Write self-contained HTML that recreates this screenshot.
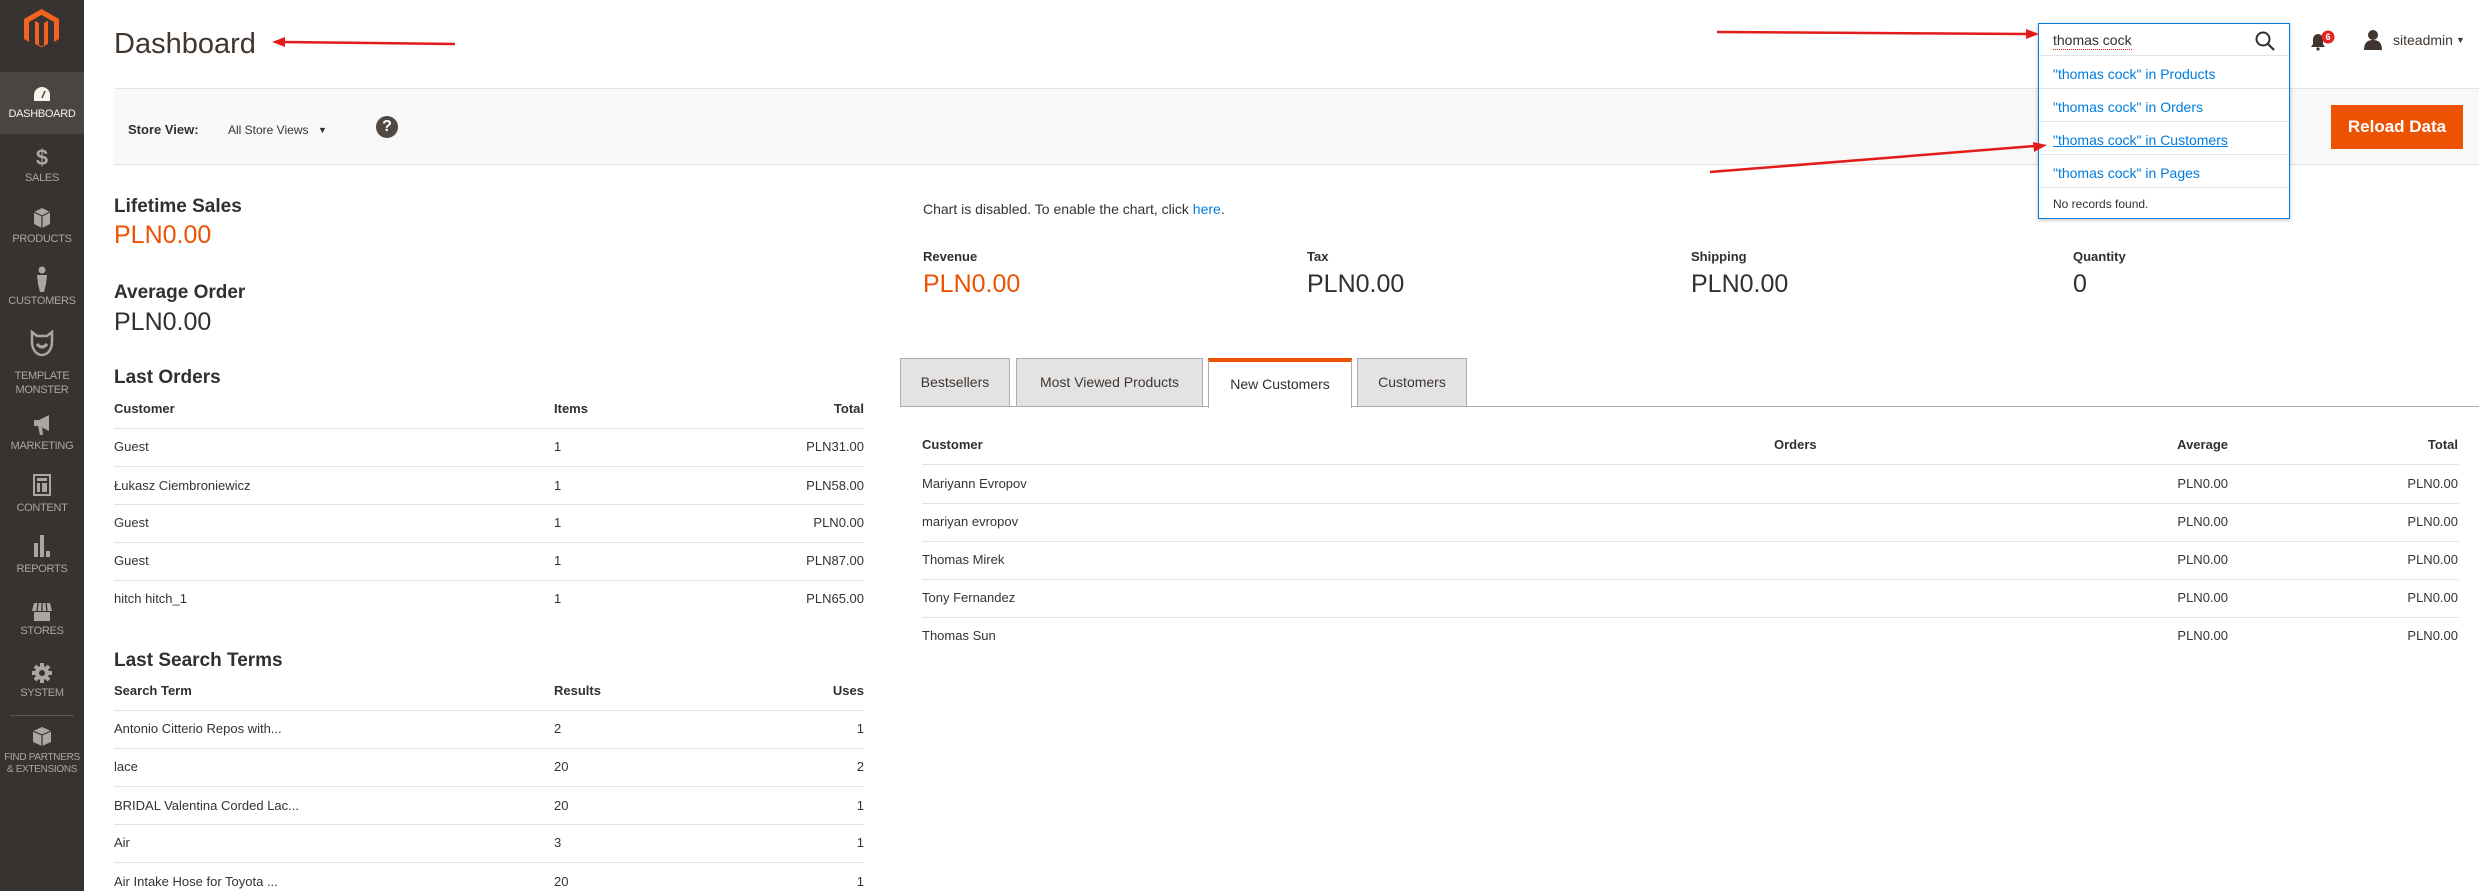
<!DOCTYPE html>
<html><head><meta charset="utf-8">
<style>
*{margin:0;padding:0;box-sizing:border-box}
body{width:2479px;height:891px;overflow:hidden;background:#fff;font-family:"Liberation Sans",sans-serif;color:#303030;position:relative}
.a{position:absolute;white-space:nowrap}
.side{position:absolute;left:0;top:0;width:84px;height:891px;background:#373330}
.nl{position:absolute;left:0;width:84px;text-align:center;color:#aaa6a0;font-size:11px;line-height:12px;text-transform:uppercase;white-space:nowrap;letter-spacing:-0.3px}
.ni{position:absolute;left:0;width:84px;text-align:center;color:#aaa6a0}
.t{font-size:13px;line-height:16px;color:#333}
.h{font-size:13px;line-height:16px;font-weight:bold;color:#303030}
.ln{position:absolute;height:1px;background:#e3e3e3}
.r{text-align:right}
.sec{font-size:19px;font-weight:bold;line-height:24px;color:#303030}
.lk{font-size:14px;line-height:18px;color:#007bdb}
</style></head><body>
<div class="side">
  <svg style="position:absolute;left:24px;top:9px" width="35" height="40" viewBox="0 0 35 40"><path d="M17.5 0L0 10v20l5 3V13l12.5-7 12.5 7v20l5-3V10z M15 14v22l2.5 1.5 2.5-1.5V14l4 -2.3v23l-6.5 3.8-6.5-3.8v-23z" fill="#f26322"/></svg>
  <div style="position:absolute;left:0;top:72px;width:84px;height:62px;background:#4a4542"></div>
  <svg class="a" style="left:33px;top:86px" width="18" height="16" viewBox="0 0 18 16"><path d="M9 1a8 8 0 0 0-8 8v6h16V9a8 8 0 0 0-8-8z" fill="#f7f3eb"/><path d="M9 12l3-7" stroke="#4a4542" stroke-width="1.5"/></svg>
  <div class="nl" style="top:108px;color:#f7f3eb">Dashboard</div>
  <div class="ni" style="top:145px;font-size:22px;font-weight:bold">$</div>
  <div class="nl" style="top:172px">Sales</div>
  <svg class="a" style="left:34px;top:208px" width="16" height="20" viewBox="0 0 16 20"><path d="M8 0l8 4v12l-8 4-8-4V4z" fill="#aaa6a0"/><path d="M0 4l8 4 8-4M8 8v12" stroke="#373330" stroke-width="1.2" fill="none"/></svg>
  <div class="nl" style="top:233px">Products</div>
  <svg class="a" style="left:36px;top:266px" width="12" height="26" viewBox="0 0 12 26"><circle cx="6" cy="4" r="3.5" fill="#aaa6a0"/><path d="M1 9h10l-1 9-2 8H4l-2-8z" fill="#aaa6a0"/></svg>
  <div class="nl" style="top:295px">Customers</div>
  <svg class="a" style="left:30px;top:330px" width="24" height="28" viewBox="0 0 24 28"><path d="M2 2l5 4h10l5-4v10c0 8-5 13-10 13S2 20 2 12z" fill="none" stroke="#aaa6a0" stroke-width="2.5"/><path d="M7 14q5 6 10 0" stroke="#aaa6a0" stroke-width="3" fill="none"/></svg>
  <div class="nl" style="top:370px">Template</div>
  <div class="nl" style="top:384px">Monster</div>
  <svg class="a" style="left:32px;top:414px" width="20" height="22" viewBox="0 0 20 22"><path d="M2 6h5l10-5v16L7 12H2z M6 12l2 9h3l-1-8z" fill="#aaa6a0"/></svg>
  <div class="nl" style="top:440px">Marketing</div>
  <svg class="a" style="left:33px;top:474px" width="18" height="22" viewBox="0 0 18 22"><rect x="1" y="1" width="16" height="20" fill="none" stroke="#aaa6a0" stroke-width="2"/><rect x="4" y="4" width="10" height="3" fill="#aaa6a0"/><rect x="4" y="9" width="3" height="9" fill="#aaa6a0"/><rect x="9" y="9" width="5" height="9" fill="#aaa6a0"/></svg>
  <div class="nl" style="top:502px">Content</div>
  <svg class="a" style="left:34px;top:535px" width="18" height="22" viewBox="0 0 18 22"><rect x="0" y="8" width="4" height="14" fill="#aaa6a0"/><rect x="6" y="0" width="4" height="22" fill="#aaa6a0"/><rect x="12" y="16" width="4" height="6" fill="#aaa6a0"/></svg>
  <div class="nl" style="top:563px">Reports</div>
  <svg class="a" style="left:32px;top:602px" width="20" height="20" viewBox="0 0 20 20"><path d="M2 1h16l2 8H0z" fill="#aaa6a0"/><rect x="2" y="10" width="16" height="9" fill="#aaa6a0"/><path d="M6 1L5 9M10 1v8M14 1l1 8" stroke="#373330" stroke-width="1.3"/></svg>
  <div class="nl" style="top:625px">Stores</div>
  <svg class="a" style="left:32px;top:663px" width="20" height="20" viewBox="0 0 20 20"><circle cx="10" cy="10" r="7" fill="#aaa6a0"/><path d="M10 0v20M0 10h20M3 3l14 14M17 3L3 17" stroke="#aaa6a0" stroke-width="4"/><circle cx="10" cy="10" r="3" fill="#373330"/></svg>
  <div class="nl" style="top:687px">System</div>
  <div style="position:absolute;left:10px;top:715px;width:64px;height:1px;background:#5a5550"></div>
  <svg class="a" style="left:32px;top:725px" width="20" height="22" viewBox="0 0 20 22"><path d="M10 2l9 4v11l-9 4-9-4V6z" fill="#aaa6a0"/><path d="M1 6l9 4 9-4M10 10v11" stroke="#373330" stroke-width="1.2" fill="none"/></svg>
  <div class="nl" style="top:752px;font-size:10px">Find Partners</div>
  <div class="nl" style="top:764px;font-size:10px">&amp; Extensions</div>
</div>

<div class="a" style="left:114px;top:26px;font-size:29px;line-height:36px;color:#41362f">Dashboard</div>

<div style="position:absolute;left:114px;top:88px;width:2365px;height:77px;background:#f8f8f8;border-top:1px solid #e3e3e3;border-bottom:1px solid #e3e3e3"></div>
<div class="a" style="left:128px;top:121px;font-size:13px;font-weight:bold;line-height:18px">Store View:</div>
<div class="a" style="left:228px;top:121px;font-size:12px;line-height:18px;color:#333">All Store Views</div>
<div class="a" style="left:318px;top:121px;font-size:9px;line-height:18px">▼</div>
<div class="a" style="left:376px;top:116px;width:22px;height:22px;border-radius:50%;background:#514943;color:#fff;font-weight:bold;font-size:16px;line-height:22px;text-align:center">?</div>
<div class="a" style="left:2331px;top:105px;width:132px;height:44px;background:#eb5202;color:#fff;font-weight:bold;font-size:17px;line-height:44px;text-align:center">Reload Data</div>

<div class="a" style="left:2038px;top:23px;width:252px;height:196px;background:#fff;border:1px solid #007bdb;box-shadow:0 1px 4px rgba(0,0,0,.25)"></div>
<div class="a" style="left:2053px;top:31px;font-size:14px;line-height:18px;color:#303030;border-bottom:1px dotted #e22">thomas cock</div>
<svg class="a" style="left:2255px;top:31px" width="20" height="20"><circle cx="8" cy="8" r="6.5" fill="none" stroke="#303030" stroke-width="2"/><path d="M13 13l6 6" stroke="#303030" stroke-width="2.2"/></svg>
<div class="ln" style="left:2039px;top:55px;width:250px"></div>
<div class="a lk" style="left:2053px;top:65px">"thomas cock" in Products</div>
<div class="ln" style="left:2039px;top:88px;width:250px"></div>
<div class="a lk" style="left:2053px;top:98px">"thomas cock" in Orders</div>
<div class="ln" style="left:2039px;top:121px;width:250px"></div>
<div class="a lk" style="left:2053px;top:131px;text-decoration:underline">"thomas cock" in Customers</div>
<div class="ln" style="left:2039px;top:154px;width:250px"></div>
<div class="a lk" style="left:2053px;top:164px">"thomas cock" in Pages</div>
<div class="ln" style="left:2039px;top:187px;width:250px"></div>
<div class="a" style="left:2053px;top:196px;font-size:12px;line-height:16px;color:#333">No records found.</div>

<svg class="a" style="left:2308px;top:30px" width="30" height="22"><path d="M3 17h14l-2-3V9a5 5 0 0 0-10 0v5z" fill="#41362f"/><circle cx="10" cy="19" r="1.6" fill="#41362f"/><circle cx="20" cy="7" r="6.5" fill="#e22626"/><text x="20" y="10" font-size="9" fill="#fff" text-anchor="middle" font-family="Liberation Sans" font-weight="bold">6</text></svg>
<svg class="a" style="left:2362px;top:29px" width="22" height="22"><circle cx="11" cy="6" r="5" fill="#41362f"/><path d="M2 21q0-10 9-10t9 10z" fill="#41362f"/></svg>
<div class="a" style="left:2393px;top:31px;font-size:14px;line-height:18px;color:#41362f">siteadmin</div>
<div class="a" style="left:2456px;top:31px;font-size:9px;line-height:18px;color:#41362f">▼</div>

<div class="a sec" style="left:114px;top:195px">Lifetime Sales</div>
<div class="a" style="left:114px;top:220px;font-size:25px;line-height:30px;color:#eb5202">PLN0.00</div>
<div class="a sec" style="left:114px;top:281px">Average Order</div>
<div class="a" style="left:114px;top:307px;font-size:25px;line-height:30px;color:#303030">PLN0.00</div>
<div class="a sec" style="left:114px;top:366px">Last Orders</div>

<div class="a h" style="left:114px;top:401px">Customer</div>
<div class="a h" style="left:554px;top:401px">Items</div>
<div class="a h r" style="left:764px;top:401px;width:100px">Total</div>
<div class="ln" style="left:114px;top:428px;width:750px"></div>
<div class="a t" style="left:114px;top:439px">Guest</div><div class="a t" style="left:554px;top:439px">1</div><div class="a t r" style="left:764px;top:439px;width:100px">PLN31.00</div>
<div class="ln" style="left:114px;top:466px;width:750px"></div>
<div class="a t" style="left:114px;top:478px">Łukasz Ciembroniewicz</div><div class="a t" style="left:554px;top:478px">1</div><div class="a t r" style="left:764px;top:478px;width:100px">PLN58.00</div>
<div class="ln" style="left:114px;top:504px;width:750px"></div>
<div class="a t" style="left:114px;top:515px">Guest</div><div class="a t" style="left:554px;top:515px">1</div><div class="a t r" style="left:764px;top:515px;width:100px">PLN0.00</div>
<div class="ln" style="left:114px;top:542px;width:750px"></div>
<div class="a t" style="left:114px;top:553px">Guest</div><div class="a t" style="left:554px;top:553px">1</div><div class="a t r" style="left:764px;top:553px;width:100px">PLN87.00</div>
<div class="ln" style="left:114px;top:580px;width:750px"></div>
<div class="a t" style="left:114px;top:591px">hitch hitch_1</div><div class="a t" style="left:554px;top:591px">1</div><div class="a t r" style="left:764px;top:591px;width:100px">PLN65.00</div>

<div class="a sec" style="left:114px;top:649px">Last Search Terms</div>
<div class="a h" style="left:114px;top:683px">Search Term</div>
<div class="a h" style="left:554px;top:683px">Results</div>
<div class="a h r" style="left:764px;top:683px;width:100px">Uses</div>
<div class="ln" style="left:114px;top:710px;width:750px"></div>
<div class="a t" style="left:114px;top:721px">Antonio Citterio Repos with...</div><div class="a t" style="left:554px;top:721px">2</div><div class="a t r" style="left:764px;top:721px;width:100px">1</div>
<div class="ln" style="left:114px;top:748px;width:750px"></div>
<div class="a t" style="left:114px;top:759px">lace</div><div class="a t" style="left:554px;top:759px">20</div><div class="a t r" style="left:764px;top:759px;width:100px">2</div>
<div class="ln" style="left:114px;top:786px;width:750px"></div>
<div class="a t" style="left:114px;top:798px">BRIDAL Valentina Corded Lac...</div><div class="a t" style="left:554px;top:798px">20</div><div class="a t r" style="left:764px;top:798px;width:100px">1</div>
<div class="ln" style="left:114px;top:824px;width:750px"></div>
<div class="a t" style="left:114px;top:835px">Air</div><div class="a t" style="left:554px;top:835px">3</div><div class="a t r" style="left:764px;top:835px;width:100px">1</div>
<div class="ln" style="left:114px;top:862px;width:750px"></div>
<div class="a t" style="left:114px;top:874px">Air Intake Hose for Toyota ...</div><div class="a t" style="left:554px;top:874px">20</div><div class="a t r" style="left:764px;top:874px;width:100px">1</div>

<div class="a" style="left:923px;top:200px;font-size:14px;line-height:18px;color:#333">Chart is disabled. To enable the chart, click <span style="color:#007bdb">here</span>.</div>
<div class="a h" style="left:923px;top:249px">Revenue</div>
<div class="a" style="left:923px;top:269px;font-size:25px;line-height:30px;color:#eb5202">PLN0.00</div>
<div class="a h" style="left:1307px;top:249px">Tax</div>
<div class="a" style="left:1307px;top:269px;font-size:25px;line-height:30px">PLN0.00</div>
<div class="a h" style="left:1691px;top:249px">Shipping</div>
<div class="a" style="left:1691px;top:269px;font-size:25px;line-height:30px">PLN0.00</div>
<div class="a h" style="left:2073px;top:249px">Quantity</div>
<div class="a" style="left:2073px;top:269px;font-size:25px;line-height:30px">0</div>

<div class="ln" style="left:900px;top:406px;width:1579px;background:#adadad"></div>
<div class="a" style="left:900px;top:358px;width:110px;height:49px;background:#e3e3e3;border:1px solid #adadad;font-size:14px;line-height:47px;text-align:center;color:#41362f">Bestsellers</div>
<div class="a" style="left:1016px;top:358px;width:187px;height:49px;background:#e3e3e3;border:1px solid #adadad;font-size:14px;line-height:47px;text-align:center;color:#41362f">Most Viewed Products</div>
<div class="a" style="left:1208px;top:358px;width:144px;height:50px;background:#fff;border:1px solid #adadad;border-top:4px solid #eb5202;border-bottom:none;font-size:14px;line-height:44px;text-align:center;color:#303030">New Customers</div>
<div class="a" style="left:1357px;top:358px;width:110px;height:49px;background:#e3e3e3;border:1px solid #adadad;font-size:14px;line-height:47px;text-align:center;color:#41362f">Customers</div>

<div class="a h" style="left:922px;top:437px">Customer</div>
<div class="a h" style="left:1774px;top:437px">Orders</div>
<div class="a h r" style="left:2128px;top:437px;width:100px">Average</div>
<div class="a h r" style="left:2358px;top:437px;width:100px">Total</div>
<div class="ln" style="left:922px;top:464px;width:1537px"></div>
<div class="a t" style="left:922px;top:476px">Mariyann Evropov</div><div class="a t r" style="left:2128px;top:476px;width:100px">PLN0.00</div><div class="a t r" style="left:2358px;top:476px;width:100px">PLN0.00</div>
<div class="ln" style="left:922px;top:503px;width:1537px"></div>
<div class="a t" style="left:922px;top:514px">mariyan evropov</div><div class="a t r" style="left:2128px;top:514px;width:100px">PLN0.00</div><div class="a t r" style="left:2358px;top:514px;width:100px">PLN0.00</div>
<div class="ln" style="left:922px;top:541px;width:1537px"></div>
<div class="a t" style="left:922px;top:552px">Thomas Mirek</div><div class="a t r" style="left:2128px;top:552px;width:100px">PLN0.00</div><div class="a t r" style="left:2358px;top:552px;width:100px">PLN0.00</div>
<div class="ln" style="left:922px;top:579px;width:1537px"></div>
<div class="a t" style="left:922px;top:590px">Tony Fernandez</div><div class="a t r" style="left:2128px;top:590px;width:100px">PLN0.00</div><div class="a t r" style="left:2358px;top:590px;width:100px">PLN0.00</div>
<div class="ln" style="left:922px;top:617px;width:1537px"></div>
<div class="a t" style="left:922px;top:628px">Thomas Sun</div><div class="a t r" style="left:2128px;top:628px;width:100px">PLN0.00</div><div class="a t r" style="left:2358px;top:628px;width:100px">PLN0.00</div>

<svg class="a" style="left:270px;top:34px" width="190" height="18"><path d="M12 8L185 10" stroke="#e21b1b" stroke-width="2.5"/><path d="M2 8l13-5v10z" fill="#e21b1b"/></svg>
<svg class="a" style="left:1715px;top:24px" width="325" height="18"><path d="M2 8L312 10" stroke="#e21b1b" stroke-width="2.5"/><path d="M324 10l-13-5v10z" fill="#e21b1b"/></svg>
<svg class="a" style="left:1705px;top:136px" width="345" height="42"><path d="M5 36L330 10" stroke="#e21b1b" stroke-width="2.5"/><path d="M342 9l-14-3 1 10z" fill="#e21b1b"/></svg>
</body></html>
